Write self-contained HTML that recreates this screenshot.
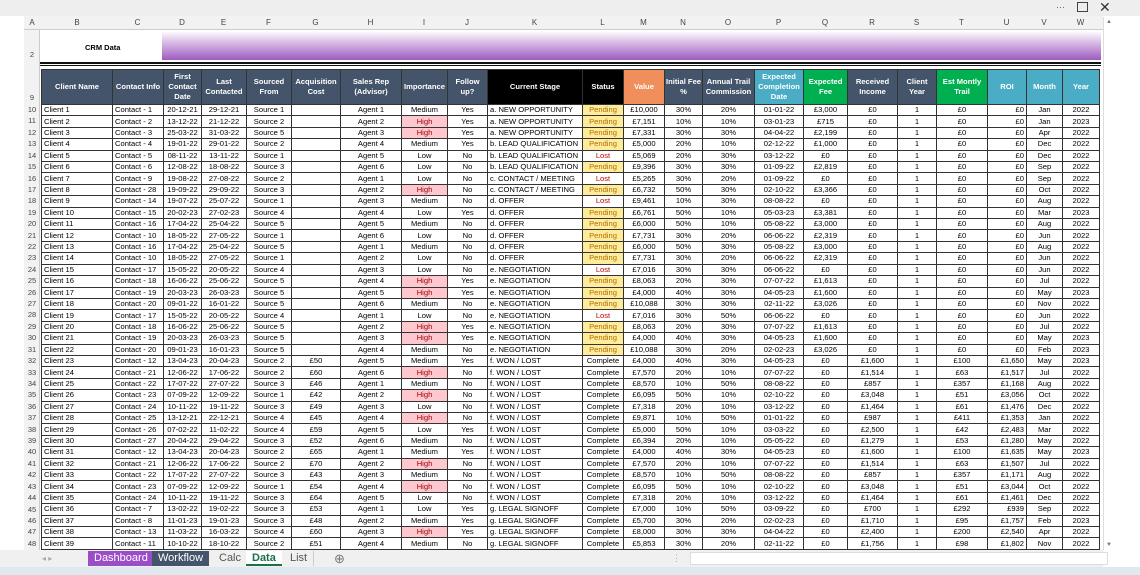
<!DOCTYPE html>
<html><head><meta charset="utf-8"><style>
*{margin:0;padding:0;box-sizing:border-box}
body{width:1140px;height:575px;overflow:hidden;background:#fff;font-family:"Liberation Sans",sans-serif;position:relative}
#top{position:absolute;left:0;top:0;width:1140px;height:16px;background:#eeeeee}
#colh{position:absolute;left:24px;top:16px;height:14px;width:1079px;background:#f2f2f2;border-bottom:1px solid #ccc;font-size:8px;color:#444}
#colh span{position:absolute;top:2px;text-align:center}
#rowh{position:absolute;left:24px;top:30px;width:16px;height:520px;background:#f2f2f2;border-right:1px solid #ccc}
.rn{position:absolute;left:0;width:16px;text-align:center;font-size:7.5px;color:#444}
#banner{position:absolute;left:162px;top:31px;width:939px;height:29px;background:linear-gradient(#fff,#e2cbeb 30%,#9d5cbf)}
#crm{position:absolute;left:85px;top:43px;font-size:7.5px;font-weight:bold}
#l1{position:absolute;left:40px;top:62px;width:1061px;height:2px;background:#111}
#l2{position:absolute;left:40px;top:65px;width:1061px;height:1px;background:#111}
table{position:absolute;left:41px;top:69px;border-collapse:collapse;table-layout:fixed;width:1059px;font-size:7.6px}
td{border:1px solid #333;height:11.41px;line-height:10px;white-space:nowrap;overflow:hidden;padding:0 2px;text-align:center}
th{height:35px;color:#fff;font-weight:bold;font-size:7.6px;line-height:10px;border:1px solid #333;background:#44546a}
th.k{background:#000}th.o{background:#f08f5b}th.t{background:#4bacc6}th.g{background:#00b050}
td.l{text-align:left}td.r{text-align:right}
.p{background:#ffeb9c;color:#b07000}.x{color:#c00000}.h{background:#ffc7ce;color:#9c0006}
#tabs{position:absolute;left:0;top:550px;width:1103px;height:17px;background:#f0f0f0;font-size:11px}
#tabs span{position:absolute;top:1px;height:15px;line-height:15px;padding:0 6px;color:#555}
#bot{position:absolute;left:0;top:567px;width:1140px;height:8px;background:#dfe7ef}
#vs{position:absolute;left:1103px;top:17px;width:11px;height:533px;background:#fff;border-left:1px solid #ddd}
</style></head><body>
<div id="top"><span style="position:absolute;left:1056px;top:2px;font-size:9px;color:#555">···</span><span style="position:absolute;left:1077px;top:2px;width:11px;height:10px;border:1px solid #444"></span><span style="position:absolute;left:1099px;top:-1px;font-size:14px;color:#333">✕</span></div>
<div id="colh">
<span style="left:18px;width:70px">B</span><span style="left:88px;width:51px">C</span><span style="left:139px;width:38px">D</span><span style="left:177px;width:45px">E</span><span style="left:222px;width:45px">F</span><span style="left:267px;width:49px">G</span><span style="left:316px;width:61px">H</span><span style="left:377px;width:46px">I</span><span style="left:423px;width:40px">J</span><span style="left:463px;width:95px">K</span><span style="left:558px;width:41px">L</span><span style="left:599px;width:41px">M</span><span style="left:640px;width:38px">N</span><span style="left:678px;width:52px">O</span><span style="left:730px;width:49px">P</span><span style="left:779px;width:44px">Q</span><span style="left:823px;width:50px">R</span><span style="left:873px;width:39px">S</span><span style="left:912px;width:51px">T</span><span style="left:963px;width:39px">U</span><span style="left:1002px;width:36px">V</span><span style="left:1038px;width:37px">W</span><span style="left:3px;width:10px">A</span>
</div>
<div id="rowh">
<div class="rn" style="top:20px">2</div><div class="rn" style="top:63px">9</div>
<div class="rn" style="top:75px">10</div><div class="rn" style="top:86.4px">11</div><div class="rn" style="top:97.8px">12</div><div class="rn" style="top:109.2px">13</div><div class="rn" style="top:120.6px">14</div><div class="rn" style="top:132px">15</div><div class="rn" style="top:143.5px">16</div><div class="rn" style="top:154.9px">17</div><div class="rn" style="top:166.3px">18</div><div class="rn" style="top:177.7px">19</div><div class="rn" style="top:189.1px">20</div><div class="rn" style="top:200.5px">21</div><div class="rn" style="top:212px">22</div><div class="rn" style="top:223.4px">23</div><div class="rn" style="top:234.8px">24</div><div class="rn" style="top:246.2px">25</div><div class="rn" style="top:257.6px">26</div><div class="rn" style="top:269px">27</div><div class="rn" style="top:280.4px">28</div><div class="rn" style="top:291.9px">29</div><div class="rn" style="top:303.3px">30</div><div class="rn" style="top:314.7px">31</div><div class="rn" style="top:326.1px">32</div><div class="rn" style="top:337.5px">33</div><div class="rn" style="top:349px">34</div><div class="rn" style="top:360.4px">35</div><div class="rn" style="top:371.8px">36</div><div class="rn" style="top:383.2px">37</div><div class="rn" style="top:394.6px">38</div><div class="rn" style="top:406px">39</div><div class="rn" style="top:417.4px">40</div><div class="rn" style="top:428.9px">41</div><div class="rn" style="top:440.3px">42</div><div class="rn" style="top:451.7px">43</div><div class="rn" style="top:463.1px">44</div><div class="rn" style="top:474.5px">45</div><div class="rn" style="top:485.9px">46</div><div class="rn" style="top:497.3px">47</div><div class="rn" style="top:508.8px">48</div>
</div>
<div id="banner"></div><div id="crm">CRM Data</div><div id="l1"></div><div id="l2"></div>
<table>
<colgroup><col style="width:71px"><col style="width:51px"><col style="width:38px"><col style="width:45px"><col style="width:45px"><col style="width:49px"><col style="width:61px"><col style="width:46px"><col style="width:40px"><col style="width:95px"><col style="width:41px"><col style="width:41px"><col style="width:38px"><col style="width:52px"><col style="width:49px"><col style="width:44px"><col style="width:50px"><col style="width:39px"><col style="width:51px"><col style="width:39px"><col style="width:36px"><col style="width:37px"></colgroup>
<tr><th>Client Name</th><th>Contact Info</th><th>First Contact Date</th><th>Last Contacted</th><th>Sourced From</th><th>Acquisition Cost</th><th>Sales Rep (Advisor)</th><th>Importance</th><th>Follow up?</th><th class="k">Current Stage</th><th class="k">Status</th><th class="o">Value</th><th>Initial Fee %</th><th>Annual Trail Commission</th><th class="t">Expected Completion Date</th><th class="g">Expected Fee</th><th>Received Income</th><th>Client Year</th><th class="g">Est Montly Trail</th><th class="t">ROI</th><th class="t">Month</th><th class="t">Year</th></tr>
<tr><td class="l">Client 1</td><td class="l">Contact - 1</td><td>20-12-21</td><td>29-12-21</td><td>Source 1</td><td></td><td>Agent 1</td><td>Medium</td><td>Yes</td><td class="l">a. NEW OPPORTUNITY</td><td class="p">Pending</td><td>£10,000</td><td>30%</td><td>20%</td><td>01-01-22</td><td>£3,000</td><td>£0</td><td>1</td><td>£0</td><td class="r">£0</td><td>Jan</td><td>2022</td></tr>
<tr><td class="l">Client 2</td><td class="l">Contact - 2</td><td>13-12-22</td><td>21-12-22</td><td>Source 2</td><td></td><td>Agent 2</td><td class="h">High</td><td>Yes</td><td class="l">a. NEW OPPORTUNITY</td><td class="p">Pending</td><td>£7,151</td><td>10%</td><td>10%</td><td>03-01-23</td><td>£715</td><td>£0</td><td>1</td><td>£0</td><td class="r">£0</td><td>Jan</td><td>2023</td></tr>
<tr><td class="l">Client 3</td><td class="l">Contact - 3</td><td>25-03-22</td><td>31-03-22</td><td>Source 5</td><td></td><td>Agent 3</td><td class="h">High</td><td>Yes</td><td class="l">a. NEW OPPORTUNITY</td><td class="p">Pending</td><td>£7,331</td><td>30%</td><td>30%</td><td>04-04-22</td><td>£2,199</td><td>£0</td><td>1</td><td>£0</td><td class="r">£0</td><td>Apr</td><td>2022</td></tr>
<tr><td class="l">Client 4</td><td class="l">Contact - 4</td><td>19-01-22</td><td>29-01-22</td><td>Source 2</td><td></td><td>Agent 4</td><td>Medium</td><td>Yes</td><td class="l">b. LEAD QUALIFICATION</td><td class="p">Pending</td><td>£5,000</td><td>20%</td><td>10%</td><td>02-12-22</td><td>£1,000</td><td>£0</td><td>1</td><td>£0</td><td class="r">£0</td><td>Dec</td><td>2022</td></tr>
<tr><td class="l">Client 5</td><td class="l">Contact - 5</td><td>08-11-22</td><td>13-11-22</td><td>Source 1</td><td></td><td>Agent 5</td><td>Low</td><td>No</td><td class="l">b. LEAD QUALIFICATION</td><td class="x">Lost</td><td>£5,069</td><td>20%</td><td>30%</td><td>03-12-22</td><td>£0</td><td>£0</td><td>1</td><td>£0</td><td class="r">£0</td><td>Dec</td><td>2022</td></tr>
<tr><td class="l">Client 6</td><td class="l">Contact - 6</td><td>12-08-22</td><td>18-08-22</td><td>Source 3</td><td></td><td>Agent 6</td><td>Low</td><td>No</td><td class="l">b. LEAD QUALIFICATION</td><td class="p">Pending</td><td>£9,396</td><td>30%</td><td>30%</td><td>01-09-22</td><td>£2,819</td><td>£0</td><td>1</td><td>£0</td><td class="r">£0</td><td>Sep</td><td>2022</td></tr>
<tr><td class="l">Client 7</td><td class="l">Contact - 9</td><td>19-08-22</td><td>27-08-22</td><td>Source 2</td><td></td><td>Agent 1</td><td>Low</td><td>No</td><td class="l">c. CONTACT / MEETING</td><td class="x">Lost</td><td>£5,265</td><td>30%</td><td>20%</td><td>01-09-22</td><td>£0</td><td>£0</td><td>1</td><td>£0</td><td class="r">£0</td><td>Sep</td><td>2022</td></tr>
<tr><td class="l">Client 8</td><td class="l">Contact - 28</td><td>19-09-22</td><td>29-09-22</td><td>Source 3</td><td></td><td>Agent 2</td><td class="h">High</td><td>No</td><td class="l">c. CONTACT / MEETING</td><td class="p">Pending</td><td>£6,732</td><td>50%</td><td>30%</td><td>02-10-22</td><td>£3,366</td><td>£0</td><td>1</td><td>£0</td><td class="r">£0</td><td>Oct</td><td>2022</td></tr>
<tr><td class="l">Client 9</td><td class="l">Contact - 14</td><td>19-07-22</td><td>25-07-22</td><td>Source 1</td><td></td><td>Agent 3</td><td>Medium</td><td>No</td><td class="l">d. OFFER</td><td class="x">Lost</td><td>£9,461</td><td>10%</td><td>30%</td><td>08-08-22</td><td>£0</td><td>£0</td><td>1</td><td>£0</td><td class="r">£0</td><td>Aug</td><td>2022</td></tr>
<tr><td class="l">Client 10</td><td class="l">Contact - 15</td><td>20-02-23</td><td>27-02-23</td><td>Source 4</td><td></td><td>Agent 4</td><td>Low</td><td>Yes</td><td class="l">d. OFFER</td><td class="p">Pending</td><td>£6,761</td><td>50%</td><td>10%</td><td>05-03-23</td><td>£3,381</td><td>£0</td><td>1</td><td>£0</td><td class="r">£0</td><td>Mar</td><td>2023</td></tr>
<tr><td class="l">Client 11</td><td class="l">Contact - 16</td><td>17-04-22</td><td>25-04-22</td><td>Source 5</td><td></td><td>Agent 5</td><td>Medium</td><td>No</td><td class="l">d. OFFER</td><td class="p">Pending</td><td>£6,000</td><td>50%</td><td>10%</td><td>05-08-22</td><td>£3,000</td><td>£0</td><td>1</td><td>£0</td><td class="r">£0</td><td>Aug</td><td>2022</td></tr>
<tr><td class="l">Client 12</td><td class="l">Contact - 10</td><td>18-05-22</td><td>27-05-22</td><td>Source 1</td><td></td><td>Agent 6</td><td>Low</td><td>No</td><td class="l">d. OFFER</td><td class="p">Pending</td><td>£7,731</td><td>30%</td><td>20%</td><td>06-06-22</td><td>£2,319</td><td>£0</td><td>1</td><td>£0</td><td class="r">£0</td><td>Jun</td><td>2022</td></tr>
<tr><td class="l">Client 13</td><td class="l">Contact - 16</td><td>17-04-22</td><td>25-04-22</td><td>Source 5</td><td></td><td>Agent 1</td><td>Medium</td><td>No</td><td class="l">d. OFFER</td><td class="p">Pending</td><td>£6,000</td><td>50%</td><td>30%</td><td>05-08-22</td><td>£3,000</td><td>£0</td><td>1</td><td>£0</td><td class="r">£0</td><td>Aug</td><td>2022</td></tr>
<tr><td class="l">Client 14</td><td class="l">Contact - 10</td><td>18-05-22</td><td>27-05-22</td><td>Source 1</td><td></td><td>Agent 2</td><td>Low</td><td>No</td><td class="l">d. OFFER</td><td class="p">Pending</td><td>£7,731</td><td>30%</td><td>20%</td><td>06-06-22</td><td>£2,319</td><td>£0</td><td>1</td><td>£0</td><td class="r">£0</td><td>Jun</td><td>2022</td></tr>
<tr><td class="l">Client 15</td><td class="l">Contact - 17</td><td>15-05-22</td><td>20-05-22</td><td>Source 4</td><td></td><td>Agent 3</td><td>Low</td><td>No</td><td class="l">e. NEGOTIATION</td><td class="x">Lost</td><td>£7,016</td><td>30%</td><td>30%</td><td>06-06-22</td><td>£0</td><td>£0</td><td>1</td><td>£0</td><td class="r">£0</td><td>Jun</td><td>2022</td></tr>
<tr><td class="l">Client 16</td><td class="l">Contact - 18</td><td>16-06-22</td><td>25-06-22</td><td>Source 5</td><td></td><td>Agent 4</td><td class="h">High</td><td>Yes</td><td class="l">e. NEGOTIATION</td><td class="p">Pending</td><td>£8,063</td><td>20%</td><td>30%</td><td>07-07-22</td><td>£1,613</td><td>£0</td><td>1</td><td>£0</td><td class="r">£0</td><td>Jul</td><td>2022</td></tr>
<tr><td class="l">Client 17</td><td class="l">Contact - 19</td><td>20-03-23</td><td>26-03-23</td><td>Source 5</td><td></td><td>Agent 5</td><td class="h">High</td><td>Yes</td><td class="l">e. NEGOTIATION</td><td class="p">Pending</td><td>£4,000</td><td>40%</td><td>30%</td><td>04-05-23</td><td>£1,600</td><td>£0</td><td>1</td><td>£0</td><td class="r">£0</td><td>May</td><td>2023</td></tr>
<tr><td class="l">Client 18</td><td class="l">Contact - 20</td><td>09-01-22</td><td>16-01-22</td><td>Source 5</td><td></td><td>Agent 6</td><td>Medium</td><td>No</td><td class="l">e. NEGOTIATION</td><td class="p">Pending</td><td>£10,088</td><td>30%</td><td>30%</td><td>02-11-22</td><td>£3,026</td><td>£0</td><td>1</td><td>£0</td><td class="r">£0</td><td>Nov</td><td>2022</td></tr>
<tr><td class="l">Client 19</td><td class="l">Contact - 17</td><td>15-05-22</td><td>20-05-22</td><td>Source 4</td><td></td><td>Agent 1</td><td>Low</td><td>No</td><td class="l">e. NEGOTIATION</td><td class="x">Lost</td><td>£7,016</td><td>30%</td><td>50%</td><td>06-06-22</td><td>£0</td><td>£0</td><td>1</td><td>£0</td><td class="r">£0</td><td>Jun</td><td>2022</td></tr>
<tr><td class="l">Client 20</td><td class="l">Contact - 18</td><td>16-06-22</td><td>25-06-22</td><td>Source 5</td><td></td><td>Agent 2</td><td class="h">High</td><td>Yes</td><td class="l">e. NEGOTIATION</td><td class="p">Pending</td><td>£8,063</td><td>20%</td><td>30%</td><td>07-07-22</td><td>£1,613</td><td>£0</td><td>1</td><td>£0</td><td class="r">£0</td><td>Jul</td><td>2022</td></tr>
<tr><td class="l">Client 21</td><td class="l">Contact - 19</td><td>20-03-23</td><td>26-03-23</td><td>Source 5</td><td></td><td>Agent 3</td><td class="h">High</td><td>Yes</td><td class="l">e. NEGOTIATION</td><td class="p">Pending</td><td>£4,000</td><td>40%</td><td>30%</td><td>04-05-23</td><td>£1,600</td><td>£0</td><td>1</td><td>£0</td><td class="r">£0</td><td>May</td><td>2023</td></tr>
<tr><td class="l">Client 22</td><td class="l">Contact - 20</td><td>09-01-23</td><td>16-01-23</td><td>Source 5</td><td></td><td>Agent 4</td><td>Medium</td><td>No</td><td class="l">e. NEGOTIATION</td><td class="p">Pending</td><td>£10,088</td><td>30%</td><td>20%</td><td>02-02-23</td><td>£3,026</td><td>£0</td><td>1</td><td>£0</td><td class="r">£0</td><td>Feb</td><td>2023</td></tr>
<tr><td class="l">Client 23</td><td class="l">Contact - 12</td><td>13-04-23</td><td>20-04-23</td><td>Source 2</td><td>£50</td><td>Agent 5</td><td>Medium</td><td>Yes</td><td class="l">f. WON / LOST</td><td>Complete</td><td>£4,000</td><td>40%</td><td>30%</td><td>04-05-23</td><td>£0</td><td>£1,600</td><td>1</td><td>£100</td><td class="r">£1,650</td><td>May</td><td>2023</td></tr>
<tr><td class="l">Client 24</td><td class="l">Contact - 21</td><td>12-06-22</td><td>17-06-22</td><td>Source 2</td><td>£60</td><td>Agent 6</td><td class="h">High</td><td>No</td><td class="l">f. WON / LOST</td><td>Complete</td><td>£7,570</td><td>20%</td><td>10%</td><td>07-07-22</td><td>£0</td><td>£1,514</td><td>1</td><td>£63</td><td class="r">£1,517</td><td>Jul</td><td>2022</td></tr>
<tr><td class="l">Client 25</td><td class="l">Contact - 22</td><td>17-07-22</td><td>27-07-22</td><td>Source 3</td><td>£46</td><td>Agent 1</td><td>Medium</td><td>No</td><td class="l">f. WON / LOST</td><td>Complete</td><td>£8,570</td><td>10%</td><td>50%</td><td>08-08-22</td><td>£0</td><td>£857</td><td>1</td><td>£357</td><td class="r">£1,168</td><td>Aug</td><td>2022</td></tr>
<tr><td class="l">Client 26</td><td class="l">Contact - 23</td><td>07-09-22</td><td>12-09-22</td><td>Source 1</td><td>£42</td><td>Agent 2</td><td class="h">High</td><td>No</td><td class="l">f. WON / LOST</td><td>Complete</td><td>£6,095</td><td>50%</td><td>10%</td><td>02-10-22</td><td>£0</td><td>£3,048</td><td>1</td><td>£51</td><td class="r">£3,056</td><td>Oct</td><td>2022</td></tr>
<tr><td class="l">Client 27</td><td class="l">Contact - 24</td><td>10-11-22</td><td>19-11-22</td><td>Source 3</td><td>£49</td><td>Agent 3</td><td>Low</td><td>No</td><td class="l">f. WON / LOST</td><td>Complete</td><td>£7,318</td><td>20%</td><td>10%</td><td>03-12-22</td><td>£0</td><td>£1,464</td><td>1</td><td>£61</td><td class="r">£1,476</td><td>Dec</td><td>2022</td></tr>
<tr><td class="l">Client 28</td><td class="l">Contact - 25</td><td>13-12-21</td><td>22-12-21</td><td>Source 4</td><td>£45</td><td>Agent 4</td><td class="h">High</td><td>No</td><td class="l">f. WON / LOST</td><td>Complete</td><td>£9,871</td><td>10%</td><td>50%</td><td>01-01-22</td><td>£0</td><td>£987</td><td>1</td><td>£411</td><td class="r">£1,353</td><td>Jan</td><td>2022</td></tr>
<tr><td class="l">Client 29</td><td class="l">Contact - 26</td><td>07-02-22</td><td>11-02-22</td><td>Source 4</td><td>£59</td><td>Agent 5</td><td>Low</td><td>Yes</td><td class="l">f. WON / LOST</td><td>Complete</td><td>£5,000</td><td>50%</td><td>10%</td><td>03-03-22</td><td>£0</td><td>£2,500</td><td>1</td><td>£42</td><td class="r">£2,483</td><td>Mar</td><td>2022</td></tr>
<tr><td class="l">Client 30</td><td class="l">Contact - 27</td><td>20-04-22</td><td>29-04-22</td><td>Source 3</td><td>£52</td><td>Agent 6</td><td>Medium</td><td>No</td><td class="l">f. WON / LOST</td><td>Complete</td><td>£6,394</td><td>20%</td><td>10%</td><td>05-05-22</td><td>£0</td><td>£1,279</td><td>1</td><td>£53</td><td class="r">£1,280</td><td>May</td><td>2022</td></tr>
<tr><td class="l">Client 31</td><td class="l">Contact - 12</td><td>13-04-23</td><td>20-04-23</td><td>Source 2</td><td>£65</td><td>Agent 1</td><td>Medium</td><td>Yes</td><td class="l">f. WON / LOST</td><td>Complete</td><td>£4,000</td><td>40%</td><td>30%</td><td>04-05-23</td><td>£0</td><td>£1,600</td><td>1</td><td>£100</td><td class="r">£1,635</td><td>May</td><td>2023</td></tr>
<tr><td class="l">Client 32</td><td class="l">Contact - 21</td><td>12-06-22</td><td>17-06-22</td><td>Source 2</td><td>£70</td><td>Agent 2</td><td class="h">High</td><td>No</td><td class="l">f. WON / LOST</td><td>Complete</td><td>£7,570</td><td>20%</td><td>10%</td><td>07-07-22</td><td>£0</td><td>£1,514</td><td>1</td><td>£63</td><td class="r">£1,507</td><td>Jul</td><td>2022</td></tr>
<tr><td class="l">Client 33</td><td class="l">Contact - 22</td><td>17-07-22</td><td>27-07-22</td><td>Source 3</td><td>£43</td><td>Agent 3</td><td>Medium</td><td>No</td><td class="l">f. WON / LOST</td><td>Complete</td><td>£8,570</td><td>10%</td><td>50%</td><td>08-08-22</td><td>£0</td><td>£857</td><td>1</td><td>£357</td><td class="r">£1,171</td><td>Aug</td><td>2022</td></tr>
<tr><td class="l">Client 34</td><td class="l">Contact - 23</td><td>07-09-22</td><td>12-09-22</td><td>Source 1</td><td>£54</td><td>Agent 4</td><td class="h">High</td><td>No</td><td class="l">f. WON / LOST</td><td>Complete</td><td>£6,095</td><td>50%</td><td>10%</td><td>02-10-22</td><td>£0</td><td>£3,048</td><td>1</td><td>£51</td><td class="r">£3,044</td><td>Oct</td><td>2022</td></tr>
<tr><td class="l">Client 35</td><td class="l">Contact - 24</td><td>10-11-22</td><td>19-11-22</td><td>Source 3</td><td>£64</td><td>Agent 5</td><td>Low</td><td>No</td><td class="l">f. WON / LOST</td><td>Complete</td><td>£7,318</td><td>20%</td><td>10%</td><td>03-12-22</td><td>£0</td><td>£1,464</td><td>1</td><td>£61</td><td class="r">£1,461</td><td>Dec</td><td>2022</td></tr>
<tr><td class="l">Client 36</td><td class="l">Contact - 7</td><td>13-02-22</td><td>19-02-22</td><td>Source 3</td><td>£53</td><td>Agent 1</td><td>Low</td><td>Yes</td><td class="l">g. LEGAL SIGNOFF</td><td>Complete</td><td>£7,000</td><td>10%</td><td>50%</td><td>03-09-22</td><td>£0</td><td>£700</td><td>1</td><td>£292</td><td class="r">£939</td><td>Sep</td><td>2022</td></tr>
<tr><td class="l">Client 37</td><td class="l">Contact - 8</td><td>11-01-23</td><td>19-01-23</td><td>Source 3</td><td>£48</td><td>Agent 2</td><td>Medium</td><td>Yes</td><td class="l">g. LEGAL SIGNOFF</td><td>Complete</td><td>£5,700</td><td>30%</td><td>20%</td><td>02-02-23</td><td>£0</td><td>£1,710</td><td>1</td><td>£95</td><td class="r">£1,757</td><td>Feb</td><td>2023</td></tr>
<tr><td class="l">Client 38</td><td class="l">Contact - 13</td><td>11-03-22</td><td>16-03-22</td><td>Source 4</td><td>£60</td><td>Agent 3</td><td class="h">High</td><td>Yes</td><td class="l">g. LEGAL SIGNOFF</td><td>Complete</td><td>£8,000</td><td>30%</td><td>30%</td><td>04-04-22</td><td>£0</td><td>£2,400</td><td>1</td><td>£200</td><td class="r">£2,540</td><td>Apr</td><td>2022</td></tr>
<tr><td class="l">Client 39</td><td class="l">Contact - 11</td><td>10-10-22</td><td>18-10-22</td><td>Source 2</td><td>£51</td><td>Agent 4</td><td>Medium</td><td>No</td><td class="l">g. LEGAL SIGNOFF</td><td>Complete</td><td>£5,853</td><td>30%</td><td>20%</td><td>02-11-22</td><td>£0</td><td>£1,756</td><td>1</td><td>£98</td><td class="r">£1,802</td><td>Nov</td><td>2022</td></tr>
</table>
<div id="vs"><div style="position:absolute;top:2px;left:2px;font-size:6px;color:#777">▲</div><div style="position:absolute;bottom:2px;left:2px;font-size:6px;color:#777">▼</div></div>
<div id="tabs">
<span style="left:36px;font-size:8px;color:#aaa">◂ ▸</span>
<span style="left:88px;background:#9b4dc8;color:#fff">Dashboard</span>
<span style="left:152px;background:#44546a;color:#fff">Workflow</span>
<span style="left:213px">Calc</span>
<span style="left:246px;background:#fff;color:#1e7145;font-weight:bold;border-bottom:2px solid #1e7145">Data</span>
<span style="left:284px;border-right:1px solid #ccc">List</span>
<span style="left:328px;font-size:13px;color:#777">⊕</span>
<span style="left:666px;font-size:9px;color:#aaa">⋮</span>
<div style="position:absolute;left:690px;top:2px;width:418px;height:13px;background:#fff;border:1px solid #ddd"></div>
</div>
<div id="bot"></div>
</body></html>
